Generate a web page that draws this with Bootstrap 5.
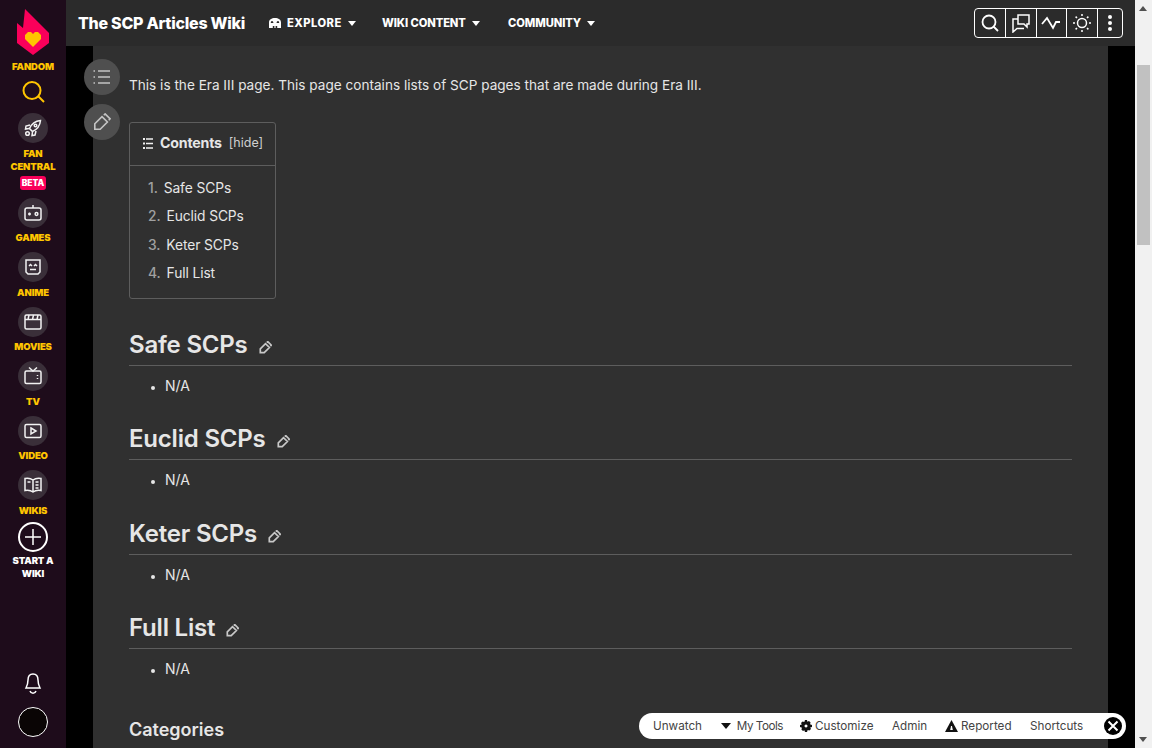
<!DOCTYPE html>
<html lang="en">
<head>
<meta charset="utf-8">
<title>Era III | The SCP Articles Wiki</title>
<link rel="stylesheet" href="https://cdn.jsdelivr.net/npm/bootstrap@5.3.0/dist/css/bootstrap.min.css">
<style>
html,body{height:100%;overflow:hidden}
body{background:#000;font-family:Inter,"Liberation Sans",sans-serif;color:#e6e6e6;font-size:14px;line-height:20px}
.shell{height:748px;width:1152px}
.rail{width:66px;background:#1e0c1b;padding-top:9px;height:748px}
.rail-logo{width:34px;height:47px;display:block}
.rail-label{color:#ffc500;font-size:9.5px;line-height:13px;font-weight:900;text-transform:uppercase;text-align:center;letter-spacing:-.15px}
.rail-label.white{color:#fff}
.brand-label{margin-top:4px}
.find{width:24px;height:24px;margin-top:7px;display:block}
.rail-item{margin-top:9px;width:66px}
.rail-item.wide{height:84.5px}
.dot{width:30px;height:30px;border-radius:50%;background:#3a2f39;margin-bottom:3.5px}
.dot svg{width:20px;height:20px}
.betatag{background:#fa005a;color:#fff;font-size:8.5px;line-height:10px;font-weight:900;border-radius:3px;padding:2px 0;display:block;width:26px;margin:3px auto 0}
.stack-step{height:54.5px}
.stack-step.stack-last{height:52px}
.plus{width:30px;height:30px;border-radius:50%;border:2px solid #fff;margin-bottom:2px}
.rail-foot{padding-bottom:11px}
.bell{width:24px;height:24px;margin-bottom:11px;display:block}
.avatar{width:30px;height:30px;border-radius:50%;border:1.5px solid #fff;background:#0a0505}
.center{width:1069px;height:748px;position:relative}
.topbar{height:46px;background:#2b2b2b;padding:0 12px;color:#fff;flex:none}
.wiki-title{font-size:16px;font-weight:800;width:191px;letter-spacing:-.25px;margin-top:-1px}
.menu-entry{font-size:11.2px;font-weight:800;text-transform:uppercase;letter-spacing:-.1px;color:#fff}
.menu-entry svg{display:block;margin-right:6px}
.entry-a{width:113px;letter-spacing:.45px}
.entry-b{width:126px}
.caret-mark{width:0;height:0;border-left:4.5px solid transparent;border-right:4.5px solid transparent;border-top:5px solid #fff;margin-left:6px}
.tools{width:149px;height:30px;border:1px solid #fff;border-radius:4px;margin-left:auto}
.tools>div{width:31px;height:28px;border-right:1px solid #fff}
.tools>div:last-child{border-right:0;width:24px}
.tools svg{width:20px;height:20px}
.sheet{width:1015px;margin-left:27px;background:#303030;padding:29px 36px 0 36px;flex:1;overflow:hidden}
.intro{margin:0 0 27px;font-size:13.6px}
.toc{width:147px;height:177px;border:1px solid #5d5d5d;border-radius:3px;margin-bottom:30px}
.toc-head{height:43px;border-bottom:1px solid #5d5d5d;padding-left:13px;padding-bottom:2px;font-weight:700;font-size:14.2px;letter-spacing:-.2px}
.toc-head svg{width:10px;height:11px;margin-right:7px}
.toc-hide{font-weight:400;font-size:12.5px;margin-left:7px;color:#cfcfcf;letter-spacing:0}
.toc-list{list-style:none;padding:8px 0 0 18px;margin:0;font-size:13.8px;letter-spacing:-.1px}
.toc-list li{height:28.4px;line-height:28px}
.toc-list i{font-style:normal;color:#a0a0a0;margin-right:6px;font-weight:500}
.sect-head{font-size:24px;line-height:30px;font-weight:600;margin:0;padding:1px 0 5px;border-bottom:1px solid #5d5d5d;color:#e6e6e6;letter-spacing:-.2px}
.sect-head svg{width:13px;height:13px;margin-left:11px;vertical-align:-1px}
.sect-list{margin:10px 0 0;padding:0 0 0 36px;height:47.33px;font-size:14px}
.sect-list li::marker{font-size:11px}
.cat-title{font-size:18px;font-weight:600;margin:12px 0 0;line-height:24px;letter-spacing:-.02px}
.float-btn{position:absolute;left:18px;width:36px;height:36px;border-radius:50%;background:#4f4f4f}
.fb-1{top:59px}.fb-2{top:104px}
.float-btn svg{width:20px;height:20px}
.float-btn.fb-2 svg{width:18px;height:18px}
.dock{position:absolute;left:573px;top:713px;width:487px;height:26px;background:#fff;border-radius:13px;color:#444;font-size:11.7px;padding:0 4px 0 14px}
.dock span{white-space:nowrap}
.dock-a{width:68px}.dock-b{width:79px}.dock-c{width:92px}.dock-d{width:53px}.dock-e{width:85px}.dock-f{width:74px}
.dock-b{letter-spacing:-.5px}
.dock svg{margin-right:3px}
.dock-x{width:18px;height:18px;border-radius:50%;background:#000;margin-left:auto}
.dock-x svg{margin:0;width:18px;height:18px}
.sbar{width:17px;height:748px;background:#f1f1f1;position:relative}
.sbar-thumb{width:13px;height:180px;background:#c1c1c1;position:absolute;top:65px;left:2px}
.sbar-up,.sbar-down{width:0;height:0;border-left:4.5px solid transparent;border-right:4.5px solid transparent;position:absolute;left:4px}
.sbar-up{top:6px;border-bottom:5px solid #505050}
.sbar-down{bottom:6px;border-top:5px solid #505050}
</style>
</head>
<body>
<div class="shell d-flex">
  <nav class="rail d-flex flex-column align-items-center flex-none">
    <svg class="rail-logo" viewBox="0 0 34 47"><path fill="#fa005a" d="M9 0 L33 24 V34 L17 46 L1 34 V14 L7 19 Z"/><path fill="#ffc500" d="M17 38 L9 30 V26 L12 23 H15 L17 25 L19 23 H22 L25 26 V30 Z"/></svg>
    <div class="rail-label brand-label">Fandom</div>
    <svg class="find" viewBox="0 0 24 24" fill="none" stroke="#ffc500" stroke-width="2"><circle cx="11" cy="10.5" r="8.5"/><path d="M17.5 16.5 L23 22"/></svg>
    <div class="d-flex flex-column align-items-center rail-item wide">
      <div class="dot d-flex align-items-center justify-content-center"><svg viewBox="0 0 20 20" fill="none" stroke="#f2f2f2" stroke-width="1.5"><path d="M17.5 2.5 C12 3 8.5 6 6.5 10.5 L9.5 13.5 C14 11.5 17 8 17.5 2.5Z"/><circle cx="12.5" cy="7.5" r="1.3"/><path d="M7 7 L3 8 L2.5 11 L6 10.5M13 13 L12 17 L9 17.5 L9.5 14"/><circle cx="4.5" cy="15.5" r="1.8"/></svg></div>
      <div class="rail-label">Fan<br>Central</div>
      <span class="betatag text-center">BETA</span>
    </div>
    <div class="d-flex flex-column align-items-center stack-step">
      <div class="dot d-flex align-items-center justify-content-center"><svg viewBox="0 0 20 20" fill="none" stroke="#f2f2f2" stroke-width="1.5"><rect x="2" y="5" width="16" height="12" rx="2"/><path d="M10 5 V2M5 11 H8M6.5 9.5 V12.5"/><circle cx="13.5" cy="11" r="1.4"/></svg></div>
      <div class="rail-label">Games</div>
    </div>
    <div class="d-flex flex-column align-items-center stack-step">
      <div class="dot d-flex align-items-center justify-content-center"><svg viewBox="0 0 20 20" fill="none" stroke="#f2f2f2" stroke-width="1.5"><path d="M3 3 H17 V15 L15 17 H5 L3 15 Z"/><path d="M6 9 L7.5 7.5 L9 9M11 9 L12.5 7.5 L14 9M7 12.5 H13"/></svg></div>
      <div class="rail-label">Anime</div>
    </div>
    <div class="d-flex flex-column align-items-center stack-step">
      <div class="dot d-flex align-items-center justify-content-center"><svg viewBox="0 0 20 20" fill="none" stroke="#f2f2f2" stroke-width="1.5"><rect x="2" y="3" width="16" height="14" rx="1.5"/><path d="M2 7.5 H18M6 3 L5 7.5M10.5 3 L9.5 7.5M15 3 L14 7.5"/></svg></div>
      <div class="rail-label">Movies</div>
    </div>
    <div class="d-flex flex-column align-items-center stack-step">
      <div class="dot d-flex align-items-center justify-content-center"><svg viewBox="0 0 20 20" fill="none" stroke="#f2f2f2" stroke-width="1.5"><rect x="2" y="5" width="16" height="12.5" rx="1.5"/><path d="M6 1.5 L10 5 L14 1.5M14.5 9 V10M14.5 12 V13"/></svg></div>
      <div class="rail-label">TV</div>
    </div>
    <div class="d-flex flex-column align-items-center stack-step">
      <div class="dot d-flex align-items-center justify-content-center"><svg viewBox="0 0 20 20" fill="none" stroke="#f2f2f2" stroke-width="1.5"><rect x="2" y="3.5" width="16" height="13" rx="1.5"/><path d="M8 7 L13 10 L8 13 Z"/></svg></div>
      <div class="rail-label">Video</div>
    </div>
    <div class="d-flex flex-column align-items-center stack-step stack-last">
      <div class="dot d-flex align-items-center justify-content-center"><svg viewBox="0 0 20 20" fill="none" stroke="#f2f2f2" stroke-width="1.5"><path d="M10 5 C8 3.5 5 3 2 3.5 V15.5 C5 15 8 15.5 10 17 C12 15.5 15 15 18 15.5 V3.5 C15 3 12 3.5 10 5 V17"/><path d="M4.5 7 H7.5M12.5 7 H15.5M12.5 10 H15.5M12.5 13 H15.5"/></svg></div>
      <div class="rail-label">Wikis</div>
    </div>
    <div class="d-flex flex-column align-items-center">
      <div class="plus d-flex align-items-center justify-content-center"><svg width="18" height="18" viewBox="0 0 18 18" fill="none" stroke="#fff" stroke-width="1.5"><path d="M9 1 V17M1 9 H17"/></svg></div>
      <div class="rail-label white">Start a<br>Wiki</div>
    </div>
    <div class="rail-foot mt-auto d-flex flex-column align-items-center">
      <svg class="bell" viewBox="0 0 24 24" fill="none" stroke="#fff" stroke-width="1.5"><path d="M5 16 C6 14 7 12 7 8 C7 4 9 2 12 2 C15 2 17 4 17 8 C17 12 18 14 19 16 Z"/><path d="M9 19 C10 22 14 22 15 19"/></svg>
      <div class="avatar"></div>
    </div>
  </nav>
  <div class="center d-flex flex-column">
    <header class="topbar d-flex align-items-center">
      <div class="wiki-title">The SCP Articles Wiki</div>
      <div class="menu-entry d-flex align-items-center entry-a"><svg width="12" height="10" viewBox="0 0 12 10" fill="#fff"><path fill-rule="evenodd" d="M0 10 V4.5 C0 1.5 2.5 0 6 0 C9.5 0 12 1.5 12 4.5 V10 H8.2 V8 H6.6 V10 H5.4 V8 H3.8 V10 Z M3 3 C2.2 3 1.8 3.8 1.8 5 H4.4 C4.4 3.8 3.8 3 3 3 Z M9 3 C8.2 3 7.6 3.8 7.6 5 H10.2 C10.2 3.8 9.8 3 9 3 Z"/></svg>Explore<span class="caret-mark"></span></div>
      <div class="menu-entry d-flex align-items-center entry-b">Wiki Content<span class="caret-mark"></span></div>
      <div class="menu-entry d-flex align-items-center">Community<span class="caret-mark"></span></div>
      <div class="tools d-flex">
        <div class="d-flex align-items-center justify-content-center"><svg viewBox="0 0 20 20" fill="none" stroke="#fff" stroke-width="1.8"><circle cx="9" cy="9" r="6.5"/><path d="M13.5 13.5 L18 18"/></svg></div>
        <div class="d-flex align-items-center justify-content-center"><svg viewBox="0 0 20 20" fill="none" stroke="#fff" stroke-width="1.5"><path d="M7 2 H18 V11 H16 V14 L13 11 H7 Z"/><path d="M7 6 H2 V19 L6 15.5 H13"/></svg></div>
        <div class="d-flex align-items-center justify-content-center"><svg viewBox="0 0 20 20" fill="none" stroke="#fff" stroke-width="1.8"><path d="M1 11 L6 5 L12 15 L15 9 H19"/></svg></div>
        <div class="d-flex align-items-center justify-content-center"><svg viewBox="0 0 20 20" fill="none" stroke="#fff" stroke-width="1.5"><circle cx="10" cy="10" r="4.5"/><path d="M10 1 V3M10 17 V19M1 10 H3M17 10 H19M3.6 3.6 L5 5M15 15 L16.4 16.4M3.6 16.4 L5 15M15 5 L16.4 3.6"/></svg></div>
        <div class="d-flex align-items-center justify-content-center"><svg viewBox="0 0 20 20" fill="#fff"><circle cx="10" cy="4" r="2"/><circle cx="10" cy="10" r="2"/><circle cx="10" cy="16" r="2"/></svg></div>
      </div>
    </header>
    <main class="sheet">
      <p class="intro">This is the Era III page. This page contains lists of SCP pages that are made during Era III.</p>
      <div class="toc">
        <div class="toc-head d-flex align-items-center"><svg viewBox="0 0 10 11" fill="#f0f0f0"><path d="M0 0h2v2H0zM3 .3h7v1.4H3zM0 4.5h2v2H0zM3 4.8h7v1.4H3zM0 9h2v2H0zM3 9.3h7v1.4H3z"/></svg>Contents<span class="toc-hide">[hide]</span></div>
        <ol class="toc-list">
          <li><i>1.</i>Safe SCPs</li>
          <li><i>2.</i>Euclid SCPs</li>
          <li><i>3.</i>Keter SCPs</li>
          <li><i>4.</i>Full List</li>
        </ol>
      </div>
      <h2 class="sect-head">Safe SCPs<svg viewBox="0 0 20 20" fill="none" stroke="#c8c8c8" stroke-width="2.6"><path d="M2 18 V12 L10 4 L16 10 L8 18 Z M12 2.5 L13.5 1 L19 6.5 L17.5 8"/></svg></h2>
      <ul class="sect-list"><li>N/A</li></ul>
      <h2 class="sect-head">Euclid SCPs<svg viewBox="0 0 20 20" fill="none" stroke="#c8c8c8" stroke-width="2.6"><path d="M2 18 V12 L10 4 L16 10 L8 18 Z M12 2.5 L13.5 1 L19 6.5 L17.5 8"/></svg></h2>
      <ul class="sect-list"><li>N/A</li></ul>
      <h2 class="sect-head">Keter SCPs<svg viewBox="0 0 20 20" fill="none" stroke="#c8c8c8" stroke-width="2.6"><path d="M2 18 V12 L10 4 L16 10 L8 18 Z M12 2.5 L13.5 1 L19 6.5 L17.5 8"/></svg></h2>
      <ul class="sect-list"><li>N/A</li></ul>
      <h2 class="sect-head">Full List<svg viewBox="0 0 20 20" fill="none" stroke="#c8c8c8" stroke-width="2.6"><path d="M2 18 V12 L10 4 L16 10 L8 18 Z M12 2.5 L13.5 1 L19 6.5 L17.5 8"/></svg></h2>
      <ul class="sect-list"><li>N/A</li></ul>
      <h3 class="cat-title">Categories</h3>
    </main>
    <div class="float-btn fb-1 d-flex align-items-center justify-content-center"><svg viewBox="0 0 20 20" fill="none" stroke="#c4c4c4" stroke-width="1.6"><path d="M6 4 H18M6 10 H18M6 16 H18M1.5 4 H3M1.5 10 H3M1.5 16 H3"/></svg></div>
    <div class="float-btn fb-2 d-flex align-items-center justify-content-center"><svg viewBox="0 0 20 20" fill="none" stroke="#c4c4c4" stroke-width="1.8"><path d="M2 18 V12 L10 4 L16 10 L8 18 Z M12 2.5 L13.5 1 L19 6.5 L17.5 8"/></svg></div>
    <div class="dock d-flex align-items-center">
      <span class="dock-a">Unwatch</span>
      <span class="dock-b d-flex align-items-center"><svg width="10" height="6" viewBox="0 0 10 6" fill="#111"><path d="M0 0 H10 L5 6 Z"/></svg>&nbsp;My Tools</span>
      <span class="dock-c d-flex align-items-center"><svg width="12" height="12" viewBox="0 0 12 12" fill="#111"><path d="M5 0 H7 L7.4 1.7 L9 1 L10.6 2.6 L10 4.3 L12 5 V7 L10.2 7.6 L11 9 L9.4 10.6 L7.7 10 L7 12 H5 L4.4 10.2 L3 11 L1.4 9.4 L2 7.7 L0 7 V5 L1.8 4.4 L1 3 L2.6 1.4 L4.3 2 Z M6 4.5 A1.5 1.5 0 1 0 6.01 4.5 Z" fill-rule="evenodd"/></svg>Customize</span>
      <span class="dock-d">Admin</span>
      <span class="dock-e d-flex align-items-center"><svg width="13" height="12" viewBox="0 0 13 12"><path fill="#111" d="M6.5 0 L13 12 H0 Z"/><path fill="#fff" d="M5.2 10 L6 6 H7 L7.8 10 Z"/></svg>Reported</span>
      <span class="dock-f">Shortcuts</span>
      <div class="dock-x d-flex align-items-center justify-content-center"><svg viewBox="0 0 18 18" fill="none" stroke="#fff" stroke-width="2"><path d="M4.5 4.5 L13.5 13.5M13.5 4.5 L4.5 13.5"/></svg></div>
    </div>
  </div>
  <aside class="sbar">
    <div class="sbar-up"></div>
    <div class="sbar-thumb"></div>
    <div class="sbar-down"></div>
  </aside>
</div>
<script src="https://cdn.jsdelivr.net/npm/bootstrap@5.3.0/dist/js/bootstrap.bundle.min.js"></script>
</body>
</html>
